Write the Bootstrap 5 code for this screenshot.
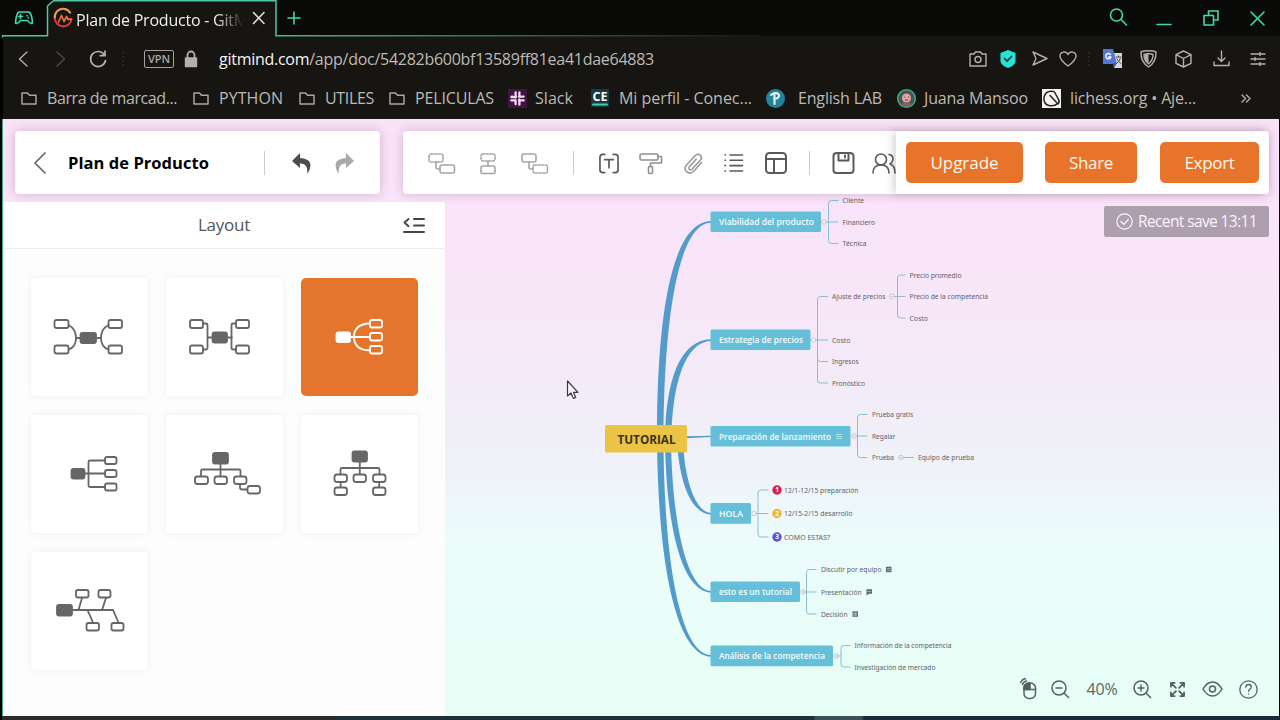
<!DOCTYPE html>
<html lang="es">
<head>
<meta charset="utf-8">
<title>Plan de Producto - GitMind</title>
<link rel="stylesheet" href="https://cdn.jsdelivr.net/npm/bootstrap@5.3.0/dist/css/bootstrap.min.css">
<style>
body{width:1280px;height:720px;overflow:hidden;background:#000;font-family:"Open Sans","Noto Sans",sans-serif;font-size:16px;line-height:1}
svg{display:block;fill:none;stroke-linecap:round;stroke-linejoin:round;overflow:visible}
.gridrow{display:grid;align-items:center;justify-items:center;white-space:nowrap}
.tabs{height:36px;background:#0a0a08;grid-template-columns:47px 229px 36px 1fr 46px 46px 48px 45px;position:relative}
.tabs svg{stroke:#3fd9ae;stroke-width:1.6}
.outline-svg{position:absolute;left:0;top:0}
.page-tab{background:#171512;color:#eee;width:229px;height:36px;clip-path:polygon(6px 0,100% 0,100% 100%,0 100%,0 6px)}
.tab-title{-webkit-mask-image:linear-gradient(90deg,#000 140px,transparent 169px);width:174px;margin-left:2px;padding:5px 0 2px}
.tool-area{background:#171512;margin-left:3px;border-left:0}
.addr{height:45px;grid-template-columns:43px 30px 44px 6px 48px 34px 755px 30px 30px 34px 22px 20px 26px 46px 24px 52px 22px;color:#bdbab6}
.addr svg{stroke:#b3b0ac;stroke-width:1.4}
.vpn{width:30px;height:18px;border:1.5px solid #a5a29e;border-radius:2px;font-size:11px;font-weight:600;justify-self:end;color:#aaa7a3}
.url{justify-self:start;padding-left:11px}
.url b{font-weight:400;color:#f5f3f1}
.marks{height:38px;padding-bottom:4px;grid-template-columns:172px 106px 90px 119px 83px 175px 131px 145px 199px 14px;padding-left:18px;justify-items:start;color:#bcb9b5}
.marks .ic{width:26px}.marks .ic.wide{width:32px}
.marks svg{stroke:#aaa7a3;stroke-width:1.5}
.app{position:relative;margin-left:2px;width:1277px;height:597px;border-left:1px solid #3aa78d;background:linear-gradient(180deg,#fae2f8 0%,#f8e5f8 25%,#f3ebf8 45%,#eff2f8 58%,#ecfbfb 70%,#e9fdf8 82%,#e6fff5 100%);overflow:hidden}
.map{position:absolute;left:0;top:0}
.map text{dominant-baseline:central}
.leaf text{font-size:7.2px;fill:#625f68;font-family:"Noto Sans",sans-serif}
.pill text{font-size:9.2px;font-weight:600;fill:#f4fdff}
.bars{position:relative;padding:12px 8px 8px 12px;gap:23px;height:83px}
.barcard{background:#fff;border-radius:4px;height:63px;box-shadow:0 0 11px rgba(90,40,80,.25)}
.barcard.gridrow{padding-top:1px}
.file-bar{width:365px;grid-template-columns:50px 199px 17px 42px 42px;justify-content:start}
.edit-bar{width:866px;position:relative;padding-left:15px;justify-content:start;grid-template-columns:47px 46px 46px 33px 38px 45px 39px 43px 42px 24px 45px 36px}
.edit-bar svg{stroke:#5a5a5a;stroke-width:1.6}
.edit-bar .off{stroke:#a5a5a5}
.vr-line{width:1px;height:24px;background:#ccc}
.actions{position:absolute;right:0;top:0;width:373px;padding-left:10px;border-radius:0 4px 4px 0;box-shadow:-3px 0 8px rgba(0,0,0,.16)}
.btn-flame{--bs-btn-bg:#e8742b;--bs-btn-color:#fff8ee;--bs-btn-hover-bg:#d9651d;--bs-btn-hover-color:#fff;height:41px;border-radius:5px;padding:0;border:0;font-size:17px;line-height:41px}
.side{position:relative;width:442px;height:514px;background:#fdfdfd}
.side-head{height:47px;background:#fff;border-bottom:1px solid #eee;position:relative;font-size:17px;color:#555;padding-bottom:2px}
.collapse-ic{position:absolute;right:20px;top:15px}
.tiles{display:grid;grid-template-columns:repeat(3,117px);column-gap:18px;row-gap:19px;padding:29px 0 0 28px}
.tile{height:118px;background:#fff;border-radius:4px;box-shadow:0 0 9px rgba(0,0,0,.06)}
.tile svg{stroke:#666;stroke-width:1.8}.tile .solid{fill:#666}
.tile.on{background:#e5742d;box-shadow:none;border-radius:5px}
.tile.on svg{stroke:#fff}.tile.on .solid{fill:#fff}
.saved{position:absolute;right:10px;top:87px;width:165px;height:31px;background:#ae9fae;border-radius:2px;color:#fbf3fb;font-size:15.5px}
.zoomer{position:absolute;right:8px;bottom:7px;height:40px;grid-template-columns:34px 30px 54px 26px 44px 26px 46px;color:#5b6866}
.zoomer svg{stroke:#55615f;stroke-width:1.5}
.footline{height:4px;margin-left:2px;background:linear-gradient(90deg,#2b2b2d 0 333px,#1f3038 334px 812px,#3c5058 813px 860px,#1b2a3a 862px)}
</style>
</head>
<body>
<header>
  <div class="tabs gridrow">
    <svg width="20" height="16" viewBox="14 10 20 16"><path d="M19 12h10q3 2 3.500 11q-2 1.500-5-2.500h-7q-3 4-5 2.500q.5-9 3.500-11zM18.500 16.500h4M20.500 14.500v4M27 15.500v.5M28.500 17.500v.5"/></svg>
    <div class="page-tab d-flex align-items-center">
      <svg class="flex-shrink-0" width="19" height="20" viewBox="54 8 19 20" style="stroke-width:2.200;margin-left:7px"><path d="M70 12.500A8.300 8.300 0 0 0 55 19" stroke="#e8a04a"/><path d="M55 19a8.300 8.300 0 0 0 16.500 0H69" stroke="#d83a35"/><path d="M58.500 22l3-6.500 2.500 6 2.500-5 1.500 3h3" stroke="#e8703a" stroke-width="1.700"/></svg>
      <div class="tab-title" style="padding-left:1px"><span data-w="172">Plan de Producto - GitM</span></div>
      <svg width="12" height="12" viewBox="253 13 12 12" style="stroke:#ddd;margin-left:4px"><path d="M253.500 13.500l10.500 11M264 13.500l-10.500 11"/></svg>
    </div>
    <svg width="14" height="14" viewBox="0 0 14 14"><path d="M7 1v12M1 7h12"/></svg>
    <span></span>
    <svg width="18" height="18" viewBox="1109 9 18 18"><circle cx="1116.500" cy="15" r="6"/><path d="M1121 19.500l5.500 5.500"/></svg>
    <svg width="16" height="18" viewBox="0 0 16 18"><path d="M1 15.500h14"/></svg>
    <svg width="16" height="16" viewBox="0 0 16 16"><path d="M1 5.500h9.500V15H1zM5.500 5V1H15v9h-4.500"/></svg>
    <svg width="15" height="15" viewBox="0 0 15 15"><path d="M1 1l13 13M14 1L1 14"/></svg>
    <svg class="outline-svg" width="1280" height="37" viewBox="0 0 1280 37" style="stroke-width:1.500"><defs><linearGradient id="fade" gradientUnits="userSpaceOnUse" x1="276" y1="0" x2="760" y2="0"><stop stop-color="#46b596"/><stop offset="1" stop-color="#171512"/></linearGradient></defs><path d="M2.500 37V35.700H47.500V6L53.500.8H276V35.700" stroke="#4fc5a5"/><path d="M276 35.700H760" stroke="url(#fade)"/></svg>
  </div>
  <div class="tool-area">
    <div class="addr gridrow">
      <svg width="10" height="16" viewBox="0 0 10 16" style="margin-left:-3px"><path d="M9 1L1.500 8 9 15"/></svg>
      <svg width="10" height="16" viewBox="0 0 10 16" style="stroke:#4c4a47"><path d="M1 1l7.500 7L1 15"/></svg>
      <svg width="18" height="18" viewBox="0 0 18 18" style="stroke-width:1.700"><path d="M15.500 5A7.500 7.500 0 1 0 16.500 10.500M16 1v4.700h-4.700"/></svg>
      <svg width="2" height="14" viewBox="0 0 2 14" style="stroke:#44423f"><path d="M1 1v.1M1 5v.1M1 9v.1M1 13v.1"/></svg>
      <span class="vpn d-flex align-items-center justify-content-center"><span data-w="22">VPN</span></span>
      <svg width="14" height="18" viewBox="0 0 14 18"><path d="M1.500 8h11v8.500h-11z" fill="#b3b0ac"/><path d="M3.500 8V5a3.500 3.500 0 0 1 7 0v3" stroke-width="1.800"/></svg>
      <span class="url"><span data-w="435"><b>gitmind.com</b>/app/doc/54282b600bf13589ff81ea41dae64883</span></span>
      <svg width="18" height="16" viewBox="0 0 18 16"><path d="M1 3h4l1.500-2h5L13 3h4v12H1z"/><circle cx="9" cy="8.500" r="3"/></svg>
      <svg width="16" height="18" viewBox="0 0 16 18" style="stroke:none"><path d="M8 0l7.500 3v8.500q-1 4-7.500 6.500Q1.500 15.500.5 11.500V3z" fill="#22e5d8"/><path d="M4.500 8.500l2.500 2.700 4.500-4.700" stroke="#173a38" stroke-width="1.800"/></svg>
      <svg width="16" height="15" viewBox="0 0 16 15"><path d="M1 1l14 6.500L1 14l3-6.500z"/></svg>
      <svg width="18" height="16" viewBox="0 0 18 16"><path d="M9 15Q1 9 1 5.200A4.200 4.200 0 0 1 9 3.500 4.200 4.200 0 0 1 17 5.200Q17 9 9 15z"/></svg>
      <svg width="2" height="14" viewBox="0 0 2 14" style="stroke:#44423f"><path d="M1 1v.1M1 5v.1M1 9v.1M1 13v.1"/></svg>
      <svg width="19" height="19" viewBox="0 0 19 19" style="stroke:none"><path d="M9 4h10v15h-8z" fill="#d8d8d8"/><path d="M0 0h10l4 15H0z" fill="#5377d6"/><path d="M10 14h4l-3 5z" fill="#3552b0"/><path d="M7.500 5.500A2.700 2.700 0 1 0 8 8H5.500" stroke="#fff" stroke-width="1.300"/><path d="M13 8h5M15.500 7v1M17.500 9q-1 4-4 5.500M14 10q1 3 4 4.500" stroke="#555" stroke-width="1"/></svg>
      <svg width="17" height="18" viewBox="0 0 17 18"><path d="M1 2q4-1.800 7.500-1Q12 .2 16 2q.5 10-7.500 15Q.5 12 1 2z"/><path d="M4 4.500q2.500-1 4.500-.7 2-.3 4.500.7.300 5.500-4.500 9.500Q3.700 10 4 4.500z"/><path d="M8.500 4q-2.500 0-4 .8Q4.200 10 8.500 13.500z" fill="#b3b0ac" stroke="none"/></svg>
      <svg width="17" height="18" viewBox="0 0 17 18"><path d="M8.500 1L16 4.700v8.600L8.500 17 1 13.300V4.700zM1 4.700l7.500 3.800L16 4.700M8.500 8.500V17"/></svg>
      <svg width="17" height="17" viewBox="0 0 17 17"><path d="M8.500 1v10M5 8l3.500 3.500L12 8M1 12v3.500h15V12"/></svg>
      <svg width="16" height="14" viewBox="0 0 16 14"><path d="M1 2h14M1 7h14M1 12h14M10 .5v3M5 5.500v3M10 10.500v3"/></svg>
    </div>
    <div class="marks gridrow">
      <span class="d-flex align-items-center"><span class="ic"><svg width="16" height="13" viewBox="0 0 16 13"><path d="M1 1h5.500l2 2.200H15V12H1z"/></svg></span><span data-w="130">Barra de marcad...</span></span>
      <span class="d-flex align-items-center"><span class="ic"><svg width="16" height="13" viewBox="0 0 16 13"><path d="M1 1h5.500l2 2.200H15V12H1z"/></svg></span><span data-w="64">PYTHON</span></span>
      <span class="d-flex align-items-center"><span class="ic"><svg width="16" height="13" viewBox="0 0 16 13"><path d="M1 1h5.500l2 2.200H15V12H1z"/></svg></span><span data-w="49">UTILES</span></span>
      <span class="d-flex align-items-center"><span class="ic"><svg width="16" height="13" viewBox="0 0 16 13"><path d="M1 1h5.500l2 2.200H15V12H1z"/></svg></span><span data-w="79">PELICULAS</span></span>
      <span class="d-flex align-items-center"><span class="ic" style="width:27px"><svg width="19" height="19" viewBox="0 0 20 20" style="stroke-width:2.400"><rect width="20" height="20" fill="#3f1443" stroke="none"/><path d="M8 3.500v5.500M4 8h1M8 12v4M12 3.500v4M12 11v5.500M3.500 8.500h5M11.500 8h5M3.500 12h4.500M11.500 12h5" stroke="#f3d9f1"/></svg></span><span data-w="38">Slack</span></span>
      <span class="d-flex align-items-center"><span class="ic" style="width:28px"><svg width="18" height="18" viewBox="0 0 18 18"><rect width="18" height="18" fill="#123a40" stroke="none"/><path d="M2 15.500h14" stroke="#45cf9f" stroke-width="2"/><text x="1.500" y="11.500" font-size="11.500" font-weight="700" fill="#fff" stroke="none" textLength="15" lengthAdjust="spacingAndGlyphs">CE</text></svg></span><span data-w="133">Mi perfil - Conec...</span></span>
      <span class="d-flex align-items-center"><span class="ic wide"><svg width="19" height="19" viewBox="0 0 19 19"><circle cx="9.500" cy="9.500" r="9.500" fill="#23839a" stroke="none"/><path d="M5 6q3-2.500 6-1.800 3 1 1.500 4-2 2.300-4.500 1.300M8.500 5.500V15" stroke="#e9fbff" stroke-width="2"/></svg></span><span data-w="84">English LAB</span></span>
      <span class="d-flex align-items-center"><span class="ic" style="width:27px"><svg width="19" height="19" viewBox="0 0 18 18"><circle cx="9" cy="9" r="8.300" fill="#4b5250" stroke="#3aa893"/><circle cx="9" cy="8.500" r="4.300" fill="#e0a79c" stroke="none"/><path d="M4 14q5-3 10 0-5 5-10 0z" fill="#8e5f5a" stroke="none"/><path d="M7 7.500h.1M11 7.500h.1M8 10.500h2" stroke="#5f3834" stroke-width="1"/></svg></span><span data-w="104">Juana Mansoo</span></span>
      <span class="d-flex align-items-center"><span class="ic" style="width:28px"><svg width="19" height="19" viewBox="0 0 19 19"><rect width="19" height="19" fill="#f5f3f1" stroke="none"/><path d="M11.500 2.500Q4 1 2 8q-1 7 5 8.500 6 1 8.500-2M8 6.500l8 8.500q2-2 .5-4.500L12.500 3" stroke="#222" stroke-width="1.500"/></svg></span><span data-w="126">lichess.org • Aje...</span></span>
      <svg width="10" height="9" viewBox="0 0 10 9"><path d="M1 1l3.500 3.500L1 8M5.500 1L9 4.500 5.500 8"/></svg>
    </div>
  </div>
</header>

<main class="app">
  <svg class="map" width="1276" height="597" viewBox="3 119 1276 597">
    <g fill="#539bcb">
      <path d="M657 438C657 300 675 222 711 221V222.700C680 223 664 310 663.500 438z"/>
      <path d="M665 438C666 380 680 340 711 339.300V341C685 341.500 672 385 671.500 438z"/>
      <path d="M685 436.300L711 435.800V437L685 438.300z"/>
      <path d="M677 440C679 480 690 513 711 514.700V513C694 512 684 475 683 440z"/>
      <path d="M665 440C666 520 680 591 711 592.700V591C686 590 672 520 671 440z"/>
      <path d="M657 440C658 560 675 655 711 656.700V655C680 654 664 560 663.500 440z"/>
    </g>
    <g stroke="#86bfd2" stroke-width="1">
      <path d="M821 222H838M838 200.500H831.500Q828.500 200.500 828.500 203.500V240.500Q828.500 243.500 831.500 243.500H838"/>
      <path d="M810 340H828M828 296.500H820.500Q817.500 296.500 817.500 299.500V380Q817.500 383 820.500 383H828M817.500 358.500Q817.500 361.500 820.500 361.500H828"/>
      <path d="M894.500 296.500H905M905 275H900.500Q897.500 275 897.500 278V315Q897.500 318 900.500 318H905"/>
      <path d="M857.500 436H867M867 414.500H860.500Q857.500 414.500 857.500 417.500V454.500Q857.500 457.500 860.500 457.500H867M903.500 457.500H913.500"/>
      <path d="M756 513.500H768M768 490H761Q758 490 758 493V534Q758 537 761 537H768"/>
      <path d="M805 592H816M816 569.500H809.500Q806.500 569.500 806.500 572.500V611Q806.500 614 809.500 614H816"/>
      <path d="M838 656H841M850 645.500H844Q841 645.500 841 648.500V664Q841 667 844 667H850"/>
    </g>
    <g stroke="#bdbfc9" stroke-width=".8" fill="#f5eff8">
      <circle cx="824" cy="222" r="2.300"/><circle cx="813.500" cy="340" r="2.300"/><circle cx="892" cy="296.500" r="2.500"/><circle cx="854" cy="436" r="2.500"/><circle cx="901" cy="457.500" r="2.300"/><circle cx="754" cy="513.500" r="2.300"/><circle cx="803" cy="592" r="2.300"/><circle cx="836" cy="656" r="2.500"/>
      <path d="M891 296.500h2M853 436h2M900 457.500h2M802 592h2M835 656h2"/>
    </g>
    <g fill="#65bfd9">
      <rect x="710.500" y="211.500" width="110.500" height="20.500" rx="1.500"/><rect x="710.500" y="329.500" width="100" height="20.500" rx="1.500"/><rect x="710.500" y="426" width="140" height="20.500" rx="1.500"/><rect x="710.500" y="503" width="40.500" height="20.700" rx="1.500"/><rect x="710.500" y="581.500" width="89.500" height="20.500" rx="1.500"/><rect x="710.500" y="645.500" width="122.500" height="20.800" rx="1.500"/>
    </g>
    <g class="pill" transform="translate(0 -.5)">
      <text x="719" y="222" textLength="95" lengthAdjust="spacingAndGlyphs">Viabilidad del producto</text>
      <text x="719" y="340" textLength="84" lengthAdjust="spacingAndGlyphs">Estrategia de precios</text>
      <text x="719" y="436.500" textLength="112" lengthAdjust="spacingAndGlyphs">Preparación de lanzamiento</text>
      <text x="719" y="513.800" textLength="24" lengthAdjust="spacingAndGlyphs">HOLA</text>
      <text x="719" y="592" textLength="73" lengthAdjust="spacingAndGlyphs">esto es un tutorial</text>
      <text x="719" y="656" textLength="106" lengthAdjust="spacingAndGlyphs">Análisis de la competencia</text>
    </g>
    <path d="M836.500 434.500h5M836.500 436.500h5M836.500 438.500h5" stroke="#c3ebf5" stroke-width=".8"/>
    <rect x="605" y="425" width="82" height="27.500" rx="1.500" fill="#ebc345"/>
    <text x="617.500" y="439" font-size="12.500" font-weight="700" fill="#3b3220" textLength="58" lengthAdjust="spacingAndGlyphs">TUTORIAL</text>
    <g class="leaf" transform="translate(0 -.3)">
      <text x="842.500" y="200.200" textLength="21.500" lengthAdjust="spacingAndGlyphs">Cliente</text><text x="842.500" y="222" textLength="32.500" lengthAdjust="spacingAndGlyphs">Financiero</text><text x="842.500" y="243.500" textLength="24" lengthAdjust="spacingAndGlyphs">Técnica</text>
      <text x="832" y="296.500" textLength="53.500" lengthAdjust="spacingAndGlyphs">Ajuste de precios</text><text x="832" y="340" textLength="18.500" lengthAdjust="spacingAndGlyphs">Costo</text><text x="832" y="361.500" textLength="26.500" lengthAdjust="spacingAndGlyphs">Ingresos</text><text x="832" y="383" textLength="33" lengthAdjust="spacingAndGlyphs">Pronóstico</text>
      <text x="909.500" y="275" textLength="52" lengthAdjust="spacingAndGlyphs">Precio promedio</text><text x="909.500" y="296.500" textLength="78.500" lengthAdjust="spacingAndGlyphs">Precio de la competencia</text><text x="909.500" y="318" textLength="18.500" lengthAdjust="spacingAndGlyphs">Costo</text>
      <text x="872" y="414.500" textLength="41" lengthAdjust="spacingAndGlyphs">Prueba gratis</text><text x="872" y="436" textLength="23.500" lengthAdjust="spacingAndGlyphs">Regalar</text><text x="872" y="457.500" textLength="22" lengthAdjust="spacingAndGlyphs">Prueba</text><text x="918" y="457.500" textLength="56" lengthAdjust="spacingAndGlyphs">Equipo de prueba</text>
      <text x="784" y="490" textLength="74.500" lengthAdjust="spacingAndGlyphs">12/1-12/15 preparación</text><text x="784" y="513.500" textLength="68.500" lengthAdjust="spacingAndGlyphs">12/15-2/15 desarrollo</text><text x="784" y="537" textLength="46" lengthAdjust="spacingAndGlyphs">COMO ESTAS?</text>
      <text x="821" y="569.500" textLength="60.500" lengthAdjust="spacingAndGlyphs">Discutir por equipo</text><text x="821" y="592" textLength="40.500" lengthAdjust="spacingAndGlyphs">Presentación</text><text x="821" y="614" textLength="26.500" lengthAdjust="spacingAndGlyphs">Decisión</text>
      <text x="854.500" y="645.500" textLength="97" lengthAdjust="spacingAndGlyphs">Información de la competencia</text><text x="854.500" y="667" textLength="81" lengthAdjust="spacingAndGlyphs">Investigación de mercado</text>
    </g>
    <g><circle cx="777" cy="490" r="4.700" fill="#d6204f"/><circle cx="777" cy="513.500" r="4.700" fill="#efb540"/><circle cx="777" cy="537" r="4.700" fill="#5a55d6"/>
      <g font-size="6.500" font-weight="700" fill="#fff" text-anchor="middle"><text x="777" y="489.700">1</text><text x="777" y="513.200">2</text><text x="777" y="536.700">3</text></g></g>
    <g fill="#5f6b70"><rect x="886" y="566.700" width="5.500" height="5.500"/><path d="M866.500 589.300h5.500v4.500h-3l-2.500 1.700z"/><rect x="852.500" y="611.300" width="5.500" height="5.500"/><path d="M887.300 568.500h3M887.300 570.300h3M867.700 591.500h3M853.500 613.300h3.500M853.500 615h3.500M855.200 612.500v3.500" stroke="#cfdcdc" stroke-width=".6"/></g>
    <path d="M567.500 381V396L571 393L573.500 398.500L575.700 397.500L573.500 392.300H578z" fill="#f8f5fa" stroke="#3c3a40" stroke-width="1.200"/>
  </svg>

  <div class="bars d-flex">
    <div class="barcard file-bar gridrow">
      <svg width="12" height="22" viewBox="0 0 12 22" stroke="#666" stroke-width="1.700"><path d="M11 1L1 11l10 10"/></svg>
      <span class="fw-bold text-black" style="justify-self:start;padding-left:3px;padding-top:1px;font-size:16.500px"><span data-w="141">Plan de Producto</span></span>
      <span class="vr-line" style="justify-self:start"></span>
      <svg width="20" height="21" viewBox="0 0 20 21"><path d="M8 0L0 8l8 7v-4.500q8-1 7.500 10.500Q24 6 8 5z" fill="#4d4d4d"/></svg>
      <svg width="20" height="21" viewBox="0 0 20 21"><path d="M12 0l8 8-8 7v-4.500q-8-1-7.500 10.500Q-4 6 12 5z" fill="#a9a9a9"/></svg>
    </div>
    <div class="barcard edit-bar gridrow">
      <svg class="off" width="27" height="21" viewBox="0 0 27 21"><rect x="1" y="1" width="14" height="8" rx="2" stroke-dasharray="2 1.500"/><rect x="12" y="12" width="14.500" height="8" rx="2"/><path d="M8 9v5q0 2 2 2h2"/></svg>
      <svg class="off" width="16" height="21" viewBox="0 0 16 21"><rect x="1" y="1" width="14" height="7" rx="2" stroke-dasharray="2 1.500"/><rect x="1" y="13" width="14" height="7.500" rx="2"/><path d="M8 8v5"/></svg>
      <svg class="off" width="27" height="21" viewBox="0 0 27 21"><rect x="1" y="1" width="14" height="8" rx="2"/><rect x="12" y="12" width="14.500" height="8" rx="2" stroke-dasharray="2 1.500"/><path d="M8 9v5q0 2 2 2h2"/></svg>
      <span class="vr-line"></span>
      <svg width="20" height="21" viewBox="0 0 21 21" style="stroke-width:1.800"><path d="M6 1H4Q1 1 1 4v2.500M1 8v9q0 3 3 3h2M15 1h2q3 0 3 3v2.500M20 8v9q0 3-3 3h-2M6 6.500h9M10.500 6.500V15"/></svg>
      <svg width="24" height="21" viewBox="0 0 24 21" style="stroke:#8f8f8f"><rect x="1" y="1" width="18" height="6" rx="1.500"/><path d="M19 3.500h3.500V10H11.500v3.500"/><rect x="9.500" y="13.500" width="4" height="7" rx="1"/></svg>
      <svg width="20" height="21" viewBox="0 0 20 21" style="stroke:#9a9a9a"><path d="M18.500 9.500l-8 9q-3.500 3-7 .2-3-3.300 0-6.700l9-9.700q2.500-2 5 0 2 2.300 0 4.700l-8.500 9.300q-1.500 1-2.700 0-1-1.300 0-2.500l7-7.800"/></svg>
      <svg width="19" height="18" viewBox="0 0 19 18"><path d="M6 1h12.500M6 6.300h12.500M6 11.600h12.500M6 17h12.500M1 1h.5M1 6.300h.5M1 11.600h.5M1 17h.5"/></svg>
      <svg width="22" height="22" viewBox="0 0 22 22" style="stroke-width:2"><rect x="1" y="1" width="20" height="20" rx="3.500"/><path d="M1 7h20M9 7v14"/></svg>
      <span class="vr-line"></span>
      <svg width="21" height="22" viewBox="0 0 21 22" style="stroke-width:2"><path d="M4 1h13q3.500 0 3.500 3.500V18q0 3-3 3h-14q-3 0-3-3V4Q.5 1 4 1z"/><path d="M5.500 1v7.500h10V1M12 3.500v2"/></svg>
      <svg width="24" height="21" viewBox="0 0 24 21"><circle cx="9" cy="6.500" r="5.500"/><path d="M1 20q0-8 8-8t8 8M17 1.500q4 .5 4 4.500-.3 3.500-3 5 5 1.500 5 9"/></svg>
      <div class="barcard actions d-flex align-items-center">
        <button class="btn btn-flame" style="width:117px"><span data-w="68">Upgrade</span></button>
        <button class="btn btn-flame" style="width:92px;margin-left:22px"><span data-w="44">Share</span></button>
        <button class="btn btn-flame" style="width:99px;margin-left:23px"><span data-w="50">Export</span></button>
      </div>
    </div>
  </div>

  <section class="side">
    <div class="side-head d-flex align-items-center justify-content-center"><span data-w="52">Layout</span>
      <svg class="collapse-ic" width="22" height="17" viewBox="0 0 22 17" stroke="#444" stroke-width="1.900"><path d="M5.500 2L1.500 5.500l4 3.700M11 2h10M11 8.500h10M1 15h20"/></svg></div>
    <div class="tiles">
      <div class="tile"><svg width="117" height="118" viewBox="31 278 117 118"><rect x="54.500" y="320" width="14" height="8" rx="2"/><rect x="54.500" y="345.500" width="14" height="8" rx="2"/><rect x="108.500" y="320" width="13.500" height="8" rx="2"/><rect x="108.500" y="345.500" width="13.500" height="8" rx="2"/><rect class="solid" x="80.500" y="333" width="15.500" height="10" rx="2"/><path d="M68.500 325Q76 329 76 338T68.500 349.500M76 338h4M108.500 325Q101 329 101 338T108.500 349.500M97 338h4"/></svg></div>
      <div class="tile"><svg width="117" height="118" viewBox="166 278 117 118"><rect x="190" y="320" width="13" height="8" rx="2"/><rect x="190" y="345.500" width="13" height="8" rx="2"/><rect x="236" y="320" width="13" height="8" rx="2"/><rect x="236" y="345.500" width="13" height="8" rx="2"/><rect class="solid" x="212.500" y="332.500" width="14.500" height="10" rx="2"/><path d="M203 323.500h3q1.500 0 1.500 1.500v23q0 1.500-1.500 1.500h-3M207.500 337.500h4M236 323.500h-3q-1.500 0-1.500 1.500v23q0 1.500 1.500 1.500h3M228 337.500h4"/></svg></div>
      <div class="tile on"><svg width="117" height="118" viewBox="301 278 117 118"><rect x="370" y="320" width="12" height="7.500" rx="2"/><rect x="370" y="333" width="12" height="7.500" rx="2"/><rect x="370" y="346" width="12" height="7.500" rx="2"/><rect class="solid" x="336.500" y="332.500" width="13.500" height="9.500" rx="2"/><path d="M370 323.500Q354 324 354 337T370 350.500M350 337h20"/></svg></div>
      <div class="tile"><svg width="117" height="118" viewBox="31 415 117 118"><rect x="105" y="457" width="11.500" height="7" rx="2"/><rect x="105" y="470" width="11.500" height="7" rx="2"/><rect x="105" y="483.500" width="11.500" height="7" rx="2"/><rect class="solid" x="71.500" y="469" width="13" height="9.500" rx="2"/><path d="M105 460.500H90q-1.500 0-1.500 1.500v23.500q0 1.500 1.500 1.500h15M85 473.500h20"/></svg></div>
      <div class="tile"><svg width="117" height="118" viewBox="166 415 117 118"><rect x="195" y="476.500" width="13" height="7.500" rx="2.500"/><rect x="214.500" y="476.500" width="12.500" height="7.500" rx="2.500"/><rect x="234" y="476.500" width="12.500" height="7.500" rx="2.500"/><rect x="247.500" y="486" width="12.500" height="7.500" rx="2.500"/><rect class="solid" x="213" y="453" width="15" height="10.500" rx="2"/><path d="M220.500 464v12M201 476v-5q0-1.500 1.500-1.500H239q1.500 0 1.500 1.500v5M240 485v2.500q0 2 2 2h5"/></svg></div>
      <div class="tile"><svg width="117" height="118" viewBox="301 415 117 118"><rect x="334.500" y="474.500" width="12.500" height="7.500" rx="2.500"/><rect x="353.500" y="474.500" width="12.500" height="7.500" rx="2.500"/><rect x="373" y="474.500" width="12.500" height="7.500" rx="2.500"/><rect x="334.500" y="487.500" width="12.500" height="7.500" rx="2.500"/><rect x="373" y="487.500" width="12.500" height="7.500" rx="2.500"/><rect class="solid" x="352.500" y="451.500" width="14.500" height="10" rx="2"/><path d="M359.800 462v12M340.500 474v-4.500q0-1.500 1.500-1.500h36q1.500 0 1.500 1.500v4.500M340.700 482.500v4.500M379.200 482.500v4.500"/></svg></div>
      <div class="tile"><svg width="117" height="118" viewBox="31 552 117 118"><rect x="76" y="590" width="12.500" height="7.500" rx="2"/><rect x="98.500" y="590" width="12" height="7.500" rx="2"/><rect x="86.500" y="623" width="12.500" height="7.500" rx="2"/><rect x="111.500" y="623" width="12" height="7.500" rx="2"/><rect class="solid" x="57" y="605" width="15" height="10.500" rx="2"/><path d="M73 610h40l5.500 12.500M82 598l-3.500 12M106 598l-4 12M87.500 610l5.500 12.500"/></svg></div>
    </div>
  </section>

  <div class="saved d-flex align-items-center justify-content-center">
    <svg width="17" height="17" viewBox="0 0 17 17" stroke="#fbf3fb" stroke-width="1.200"><circle cx="8.500" cy="8.500" r="7.700"/><path d="M5 8.500l2.800 3 4.500-5"/></svg>
    <span style="margin-left:5px"><span data-w="119">Recent save 13:11</span></span>
  </div>

  <div class="zoomer gridrow">
    <svg width="17" height="22" viewBox="0 0 17 22"><rect x="4" y="5" width="11.500" height="15.500" rx="5"/><path d="M4 11.500h11.500M9.800 5v6.500"/><path d="M9.800 5v6.500H4V9q1-4 5.800-4z" fill="#55615f"/><path d="M2.500 6.500q1-3 4-3.500M.8 4.500Q2 1 5.500.8"/></svg>
    <svg width="18" height="18" viewBox="0 0 18 18"><circle cx="8" cy="8" r="7"/><path d="M13 13l4.500 4.500M5 8h6"/></svg>
    <span data-w="31">40%</span>
    <svg width="18" height="18" viewBox="0 0 18 18"><circle cx="8" cy="8" r="7"/><path d="M13 13l4.500 4.500M5 8h6M8 5v6"/></svg>
    <svg width="15" height="15" viewBox="0 0 16 16" style="stroke-width:1.900"><path d="M1 5V1h4M11 1h4v4M15 11v4h-4M5 15H1v-4M1.500 1.500L6.300 6.300M14.500 1.500L9.700 6.300M14.500 14.500L9.700 9.700M1.500 14.500L6.300 9.700"/></svg>
    <svg width="21" height="16" viewBox="0 0 21 16"><path d="M1 8Q5 1 10.500 1T20 8q-4 7-9.500 7T1 8z"/><circle cx="10.500" cy="8" r="3"/></svg>
    <svg width="19" height="19" viewBox="0 0 19 19" style="stroke-width:1.300"><circle cx="9.500" cy="9.500" r="8.700"/><path d="M6.800 7.200q.2-2.700 2.800-2.700t2.700 2.400q0 1.300-1.500 2.200-1.200.8-1.200 2.200M9.600 13.800v.2"/></svg>
  </div>
</main>
<div class="footline"></div>
<script src="https://cdn.jsdelivr.net/npm/bootstrap@5.3.0/dist/js/bootstrap.bundle.min.js"></script>
<script>
// Tracks each label so that it fills the width given in data-w.
document.querySelectorAll('[data-w]').forEach(el => {
  el.style.display = 'inline-block';
  el.style.whiteSpace = 'nowrap';
  const gap = el.dataset.w - el.getBoundingClientRect().width;
  el.style.letterSpacing = (gap / el.textContent.length).toFixed(3) + 'px';
});
</script>
</body>
</html>
